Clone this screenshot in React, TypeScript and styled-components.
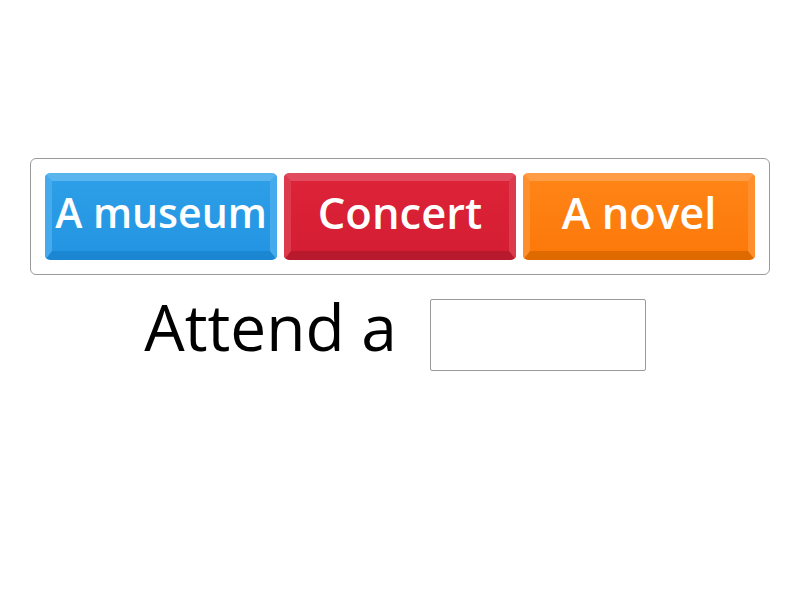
import React from "react";
import styled, { createGlobalStyle } from "styled-components";

const Global = createGlobalStyle`
  html, body { margin: 0; padding: 0; background: #fff; }
  body { font-family: "Open Sans", "Liberation Sans", sans-serif; }
`;

const Page = styled.div`
  width: 800px;
  height: 600px;
  display: flex;
  flex-direction: column;
  align-items: center;
  padding-top: 158px;
  box-sizing: border-box;
`;

const Tray = styled.div`
  width: 740px;
  height: 117px;
  box-sizing: border-box;
  border: 1px solid #9a9a9a;
  border-radius: 6px;
  display: flex;
  gap: 7px;
  padding: 14px 14px 0 14px;
`;

type Tone = { face: string; top: string; side: string; bottom: string; hi: string };

const tones: Record<string, Tone> = {
  blue: { face: "#2395e2", hi: "#2d9fe8", top: "#5ab4ed", side: "#46abec", bottom: "#1b87d2" },
  red: { face: "#d51d33", hi: "#dc2338", top: "#e04c5e", side: "#dd3a4e", bottom: "#b8192d" },
  orange: { face: "#fc790a", hi: "#ff8416", top: "#ff9c45", side: "#ff8e2c", bottom: "#df6a00" },
};

const Tile = styled.div<{ $tone: Tone; $size: number }>`
  width: 232px;
  height: 87px;
  box-sizing: border-box;
  border-style: solid;
  border-width: 8px 7px 9px 7px;
  border-color: ${(p) => p.$tone.top} ${(p) => p.$tone.side} ${(p) => p.$tone.bottom} ${(p) => p.$tone.side};
  border-radius: 5px;
  background: linear-gradient(${(p) => p.$tone.hi}, ${(p) => p.$tone.face});
  display: flex;
  align-items: center;
  justify-content: center;
  padding-bottom: 8px;
  color: #fff;
  font-weight: 600;
  font-size: ${(p) => p.$size}px;
  white-space: nowrap;
`;

const Sentence = styled.div`
  display: flex;
  align-items: center;
  margin-top: 24px;
  margin-left: -10px;
  gap: 33px;
`;

const Words = styled.span`
  font-size: 64px;
  color: #000;
  line-height: 1;
  margin-top: -16px;
`;

const Blank = styled.div`
  width: 216px;
  height: 72px;
  box-sizing: border-box;
  border: 1px solid #999;
  border-radius: 2px;
`;

export default function App() {
  return (
    <>
      <Global />
      <Page>
        <Tray>
          <Tile $tone={tones.blue} $size={41}>A museum</Tile>
          <Tile $tone={tones.red} $size={43.5}>Concert</Tile>
          <Tile $tone={tones.orange} $size={43.5}>A novel</Tile>
        </Tray>
        <Sentence>
          <Words>Attend a</Words>
          <Blank />
        </Sentence>
      </Page>
    </>
  );
}
